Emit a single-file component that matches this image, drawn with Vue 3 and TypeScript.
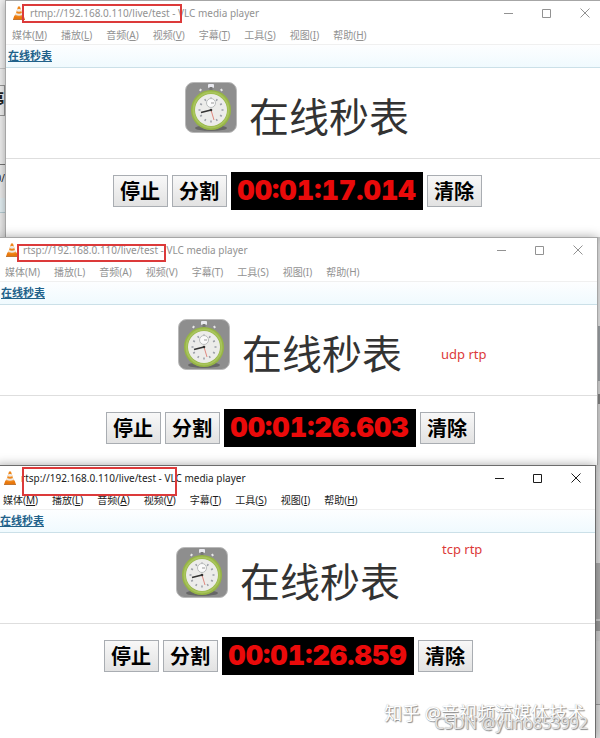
<script setup lang="ts">
interface PlayerWindow {
  id: string
  url: string
  time: string
  note?: string
  active: boolean
}

const players: PlayerWindow[] = [
  { id: 'rtmp', url: 'rtmp://192.168.0.110/live/test', time: '00:01:17.014', active: false },
  { id: 'udp', url: 'rtsp://192.168.0.110/live/test', time: '00:01:26.603', note: 'udp rtp', active: false },
  { id: 'tcp', url: 'rtsp://192.168.0.110/live/test', time: '00:01:26.859', note: 'tcp rtp', active: true },
]

const menus = [
  { label: '媒体', key: 'M' },
  { label: '播放', key: 'L' },
  { label: '音频', key: 'A' },
  { label: '视频', key: 'V' },
  { label: '字幕', key: 'T' },
  { label: '工具', key: 'S' },
  { label: '视图', key: 'I' },
  { label: '帮助', key: 'H' },
]

const ticks = Array.from({ length: 12 }, (_, i) => `rotate(${i * 30} 26 28)`)
</script>

<template>
  <main class="desktop">
    <div class="behind behind-left" aria-hidden="true">
      <span class="sliver-button">停</span>
      <span class="sliver-title">0/</span>
    </div>
    <div class="behind behind-right" aria-hidden="true">
      <span class="thumb"></span>
      <span class="notch"></span>
    </div>

    <section v-for="p in players" :key="p.id" class="window" :class="[p.id, { active: p.active }]">
      <header class="titlebar">
        <svg class="cone" viewBox="0 0 12 14" aria-hidden="true">
          <path d="M1.4 9.5h9.2L12 13.6H0z" fill="#e8770c" />
          <path d="M5 .5h2l3 10q-4 2-8 0z" fill="#ef8618" />
          <path d="M4.4 3h3.2l.8 2.3q-2.4.9-4.8 0zM3 7.1q3 1.3 6 0l.6 2q-3.600 1.500-7.200 0z" fill="#eee9e3" />
          <path d="M0 13.1h12v.7H0z" fill="#a95a10" />
        </svg>
        <h2 class="title">{{ p.url }} - VLC media player</h2>
        <span class="mark"></span>
        <div class="controls">
          <button type="button" aria-label="Minimize">
            <svg viewBox="0 0 10 10"><path d="M0 5.500h9" /></svg>
          </button>
          <button type="button" aria-label="Maximize">
            <svg viewBox="0 0 10 10"><path d="M.5 1.500h8v8h-8z" /></svg>
          </button>
          <button type="button" aria-label="Close">
            <svg viewBox="0 0 10 10"><path d="M.5.5l9 9M9.500.5l-9 9" /></svg>
          </button>
        </div>
      </header>

      <nav class="menubar">
        <button v-for="m in menus" :key="m.key" type="button">
          {{ m.label }}(<span class="key">{{ m.key }}</span>)
        </button>
      </nav>

      <div class="linkbar"><a href="#">在线秒表</a></div>

      <div class="hero">
        <svg class="clock" viewBox="0 0 52 52" aria-hidden="true">
          <rect x=".5" y=".5" width="51" height="50" rx="8" fill="#8e8e8e" stroke="#b9b9b9" />
          <ellipse cx="26" cy="46" rx="16" ry="3" fill="#666" />
          <rect x="23" y="2" width="6" height="4" rx="1" fill="#e8e8ef" />
          <rect x="24.500" y="5" width="3" height="4" fill="#777" />
          <path d="M15 9l1-2M37 9l-1-2" stroke="#e8e8e8" stroke-width="2" />
          <circle cx="26" cy="28" r="20" fill="#96b545" />
          <circle cx="26" cy="28" r="17.500" fill="none" stroke="#a8c45c" stroke-width="2" />
          <circle cx="26" cy="28" r="16" fill="#ececea" />
          <path v-for="t in ticks" :key="t" d="M26 15.500v2" :transform="t" stroke="#9a9ea6" stroke-width="1.500" />
          <circle cx="26" cy="21" r="4.500" fill="#fafafa" stroke="#b9bcbc" />
          <path d="M26 21h3" stroke="#999" />
          <path d="M26 28l-10 2.500" stroke="#333" stroke-width="1.300" />
          <path d="M26 28l3 10" stroke="#e08880" />
          <circle cx="26" cy="28" r="1.300" fill="#333" />
        </svg>
        <h1>在线秒表</h1>
        <p v-if="p.note" class="note">{{ p.note }}</p>
      </div>

      <div class="stopwatch">
        <button type="button">停止</button>
        <button type="button">分割</button>
        <output>{{ p.time }}</output>
        <button type="button">清除</button>
      </div>
    </section>

    <footer class="credits">
      <p class="zhihu">知乎 @音视频流媒体技术</p>
      <p class="csdn">CSDN @yuno853992</p>
    </footer>
  </main>
</template>

<style>
body {
  margin: 0;
}
</style>

<style scoped>
.desktop {
  position: relative;
  display: flex;
  flex-direction: column;
  min-height: 100vh;
  overflow: hidden;
  background: #ececec;
  font-family: "Noto Sans", "Noto Sans CJK SC", sans-serif;
}
.window {
  position: relative;
  box-sizing: border-box;
  border: 1px solid #a6a6a6;
  border-bottom: 0;
  background: #fff;
  color: #929292;
  box-shadow: 0 0 10px rgba(0, 0, 0, 0.35);
}
.rtmp {
  margin: 0 -5px 0 5px;
  padding-bottom: 27px;
}
.udp {
  margin: 0 2px 0 -2px;
  padding-bottom: 18px;
}
.tcp {
  flex: 1;
  margin: 0 4px 0 -4px;
}
.active {
  border-color: #6d6d6d;
  color: #1c1c1c;
}
.titlebar {
  position: relative;
  display: flex;
  align-items: center;
  gap: 5px;
  height: 24px;
  padding-left: 7px;
}
.cone {
  width: 12px;
  height: 14px;
}
.title {
  flex: 1;
  margin: 0;
  font-size: 10px;
  font-weight: 400;
  line-height: 16px;
  white-space: nowrap;
}
.mark {
  position: absolute;
  box-sizing: border-box;
  border: 2px solid #dc3a3a;
  top: 3px;
  left: 16px;
  width: 160px;
  height: 19px;
}
.udp .mark {
  top: 6px;
  left: 18px;
  width: 149px;
  height: 18px;
}
.tcp .mark {
  top: 1px;
  left: 25px;
  width: 155px;
  height: 29px;
}
.controls {
  display: flex;
}
.controls button {
  display: flex;
  align-items: center;
  justify-content: center;
  width: 38px;
  height: 24px;
  padding: 0;
  border: 0;
  background: none;
  color: inherit;
}
.controls svg {
  width: 10px;
  height: 10px;
  fill: none;
  stroke: currentColor;
}
.menubar {
  display: flex;
  gap: 14px;
  height: 19px;
  padding-left: 6px;
}
.menubar button {
  padding: 0;
  border: 0;
  background: none;
  color: inherit;
  font: 10px/21px "Noto Sans", "Noto Sans CJK SC", sans-serif;
  white-space: nowrap;
}
.key {
  text-decoration: underline;
}
.udp .key {
  text-decoration: none;
}
.linkbar {
  height: 22px;
  padding-left: 2px;
  border-top: 1px solid #f0f0f0;
  border-bottom: 1px solid #cbe0e8;
  background: linear-gradient(#fdfeff, #f0fafe);
  font-size: 11px;
  line-height: 22px;
}
.tcp .linkbar {
  padding-left: 3px;
}
.linkbar a {
  color: #21618a;
  font-weight: 700;
}
.hero {
  position: relative;
  display: flex;
  justify-content: center;
  gap: 12px;
  height: 90px;
  padding-right: 16px;
  border-bottom: 1px solid #dedede;
}
.clock {
  width: 52px;
  height: 52px;
  margin-top: 14px;
}
h1 {
  margin: 20px 0 0;
  color: #333;
  font-size: 40px;
  font-weight: 400;
  line-height: 58px;
}
.note {
  position: absolute;
  top: 39px;
  left: 442px;
  margin: 0;
  color: #dc3a3a;
  font-size: 13px;
  line-height: 20px;
}
.tcp .note {
  top: 6px;
  left: 445px;
}
.stopwatch {
  display: flex;
  align-items: center;
  justify-content: center;
  gap: 4px;
  padding: 13px 16px 0 0;
}
.stopwatch button {
  width: 55px;
  height: 32px;
  padding: 0;
  border: 1px solid #a9adb2;
  background: linear-gradient(#f8f8f8, #e2e2e2);
  color: #000;
  font: 700 20px/30px "Noto Sans CJK SC", sans-serif;
}
.stopwatch output {
  width: 192px;
  background: #000;
  color: #ea0a0a;
  font: 900 27px/38px Inter, "Liberation Sans", sans-serif;
  font-variant-numeric: tabular-nums;
  text-align: center;
  white-space: nowrap;
}
.behind {
  position: absolute;
  overflow: hidden;
  color: #222;
}
.behind-left {
  top: 0;
  left: 0;
  width: 5px;
  height: 237px;
  background: linear-gradient(#f4f4f4 68px, #ccc 68px 69px, #f2f2f2 69px 164px, #777 164px 165px, #eee 165px 198px, #e6f2f6 198px 212px, #b9cfd6 212px 213px, #eee 213px);
}
.sliver-button {
  position: absolute;
  top: 85px;
  right: 0;
  border: 1px solid #999;
  font-size: 18px;
  font-weight: 700;
  line-height: 29px;
}
.sliver-title {
  position: absolute;
  top: 170px;
  right: 0;
  font-size: 10px;
  line-height: 16px;
}
.behind-right {
  top: 237px;
  right: 0;
  bottom: 0;
  width: 8px;
  background: linear-gradient(#eee 89px, #a1a5a9 89px 144px, #ddd 144px 326px, #aaa 326px 382px, #ccc 382px 404px, #d2d2d2 404px 467px, #999 467px 468px, #ddd 468px);
}
.thumb,
.notch {
  position: absolute;
  right: 0;
  width: 4px;
}
.thumb {
  top: 157px;
  height: 10px;
  background: #888;
}
.notch {
  top: 384px;
  height: 10px;
  background: #999;
}
.credits {
  position: absolute;
  right: 12px;
  bottom: 5px;
  display: flex;
  flex-direction: column;
  align-items: flex-end;
  color: #fff;
  text-shadow: 1px 1px 1px #888, 0 0 1px #aaa;
}
.credits p {
  margin: 0;
  white-space: nowrap;
}
.credits .zhihu {
  padding-right: 3px;
  font-size: 18px;
  line-height: 22px;
}
.credits .csdn {
  margin-top: -11px;
  color: #e4e4e4;
  font-size: 16px;
  line-height: 20px;
}
</style>
